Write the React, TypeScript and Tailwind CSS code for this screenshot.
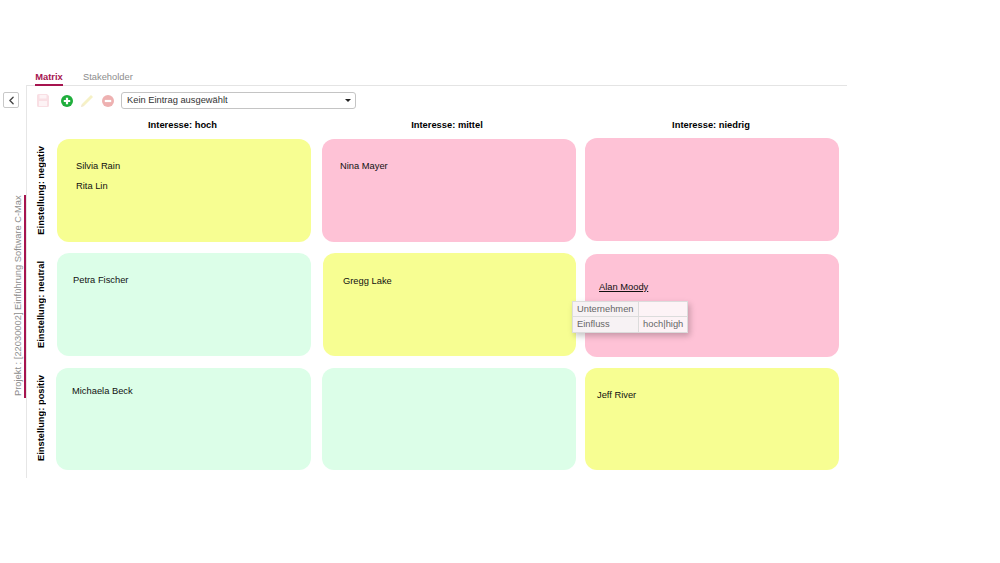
import { ChevronLeft } from "lucide-react";

const YELLOW = "bg-[#f7fe92]";
const PINK = "bg-[#fec2d6]";
const GREEN = "bg-[#dcfee8]";

function SaveIcon() {
  return (
    <svg width="12" height="13" viewBox="0 0 12 13" className="block">
      <path d="M0 1.5A1.5 1.5 0 0 1 1.500 0H10l2 2v9.500A1.500 1.500 0 0 1 10.500 13h-9A1.500 1.500 0 0 1 0 11.500z" fill="#f9dfe4" />
      <rect x="2.500" y="1" width="7" height="3.500" fill="#fdf3f5" />
      <rect x="2" y="7" width="8" height="5" fill="#fdf3f5" />
    </svg>
  );
}

function AddIcon() {
  return (
    <svg width="12" height="12" viewBox="0 0 12 12" className="block">
      <circle cx="6" cy="6" r="6" fill="#1fae3c" />
      <path d="M6 2.800v6.400M2.800 6h6.400" stroke="#fff" strokeWidth="2.200" />
    </svg>
  );
}

function PencilIcon() {
  return (
    <svg width="14" height="14" viewBox="0 0 14 14" className="block">
      <path d="M11 1l2 2-9 9-3 1 1-3z" fill="#f6f1c6" />
      <path d="M1 13l1-3 2 2z" fill="#f2e7d4" />
    </svg>
  );
}

function RemoveIcon() {
  return (
    <svg width="12" height="12" viewBox="0 0 12 12" className="block">
      <circle cx="6" cy="6" r="6" fill="#eeb1b1" />
      <path d="M2.800 6h6.400" stroke="#fff" strokeWidth="2.200" />
    </svg>
  );
}

function RowLabel({ text }: { text: string }) {
  return (
    <div className="flex items-center justify-center pl-[7px]">
      <span className="rotate-180 text-[9.333px] leading-[12px] font-bold text-black whitespace-nowrap [writing-mode:vertical-rl]">
        {text}
      </span>
    </div>
  );
}

export default function App() {
  return (
    <div className="w-[1000px] h-[563px] bg-white pt-[70px] font-['Liberation_Sans',Arial,sans-serif] overflow-hidden">
      <div className="flex h-[408px]">
        <aside className="w-[27px] shrink-0 mt-[15px] h-[393px] border-r border-[#e6e6e6] flex flex-col">
          <button className="ml-[3px] mt-[7px] w-4 h-4 border border-[#c8c8c8] rounded-[2px] flex items-center justify-center text-[#444]">
            <ChevronLeft size={13} strokeWidth={2.500} />
          </button>
          <div className="mt-[87px] h-[203px] w-[26px] flex justify-end">
            <span className="rotate-180 border-l-2 border-[#a6144f] pr-[1px] h-[203px] text-[9.333px] leading-[12px] text-[#8d8d8d] whitespace-nowrap text-right [writing-mode:vertical-rl]">
              Projekt : [22030002] Einführung Software C-Max
            </span>
          </div>
        </aside>

        <main className="w-[820px]">
          <nav className="h-[16px] border-b border-[#e4e4e4] flex pl-[8px] text-[9.333px] leading-[14px]">
            <span className="h-[16px] w-[28px] border-b-2 border-[#a6144f] font-bold text-[#a6144f] text-center">Matrix</span>
            <span className="ml-[20px] text-[#8d8d8d]">Stakeholder</span>
          </nav>

          <div className="h-[17px] mt-[6px] flex items-center">
            <span className="ml-[10px]"><SaveIcon /></span>
            <span className="ml-[12px]"><AddIcon /></span>
            <span className="ml-[7px]"><PencilIcon /></span>
            <span className="ml-[8px]"><RemoveIcon /></span>
            <div className="ml-[7px] w-[235px] h-[17px] border border-[#c4c4c4] rounded-[3px] flex items-center justify-between pl-[5px] pr-[4px] text-[9.333px] text-[#333]">
              <span>Kein Eintrag ausgewählt</span>
              <span className="w-0 h-0 border-x-[3px] border-x-transparent border-t-[3px] border-t-[#222]" />
            </div>
          </div>

          <div className="grid grid-cols-[20px_254px_254px_254px] grid-rows-[14px_103px_103px_103px] gap-x-[10px] gap-y-[11px] mt-[5px] relative">
            <div />
            <div className="pt-[5px] pr-[3px] text-center text-[9.333px] font-bold text-black leading-[12px]">Interesse: hoch</div>
            <div className="pt-[5px] pr-[2px] text-center text-[9.333px] font-bold text-black leading-[12px]">Interesse: mittel</div>
            <div className="pt-[5px] pr-[2px] text-center text-[9.333px] font-bold text-black leading-[12px]">Interesse: niedrig</div>

            <RowLabel text="Einstellung: negativ" />
            <div className={`${YELLOW} rounded-[12px] pl-[19px] pt-[20px] text-[9.333px] leading-[14px] text-[#111]`}>
              <p>Silvia Rain</p>
              <p className="mt-[6px]">Rita Lin</p>
            </div>
            <div className={`${PINK} rounded-[12px] ml-px -mr-px pl-[18px] pt-[20px] text-[9.333px] leading-[14px] text-[#111]`}>Nina Mayer</div>
            <div className={`${PINK} rounded-[12px] -mt-px mb-px`} />

            <RowLabel text="Einstellung: neutral" />
            <div className={`${GREEN} rounded-[12px] pl-[16px] pt-[20px] text-[9.333px] leading-[14px] text-[#111]`}>Petra Fischer</div>
            <div className={`${YELLOW} rounded-[12px] ml-[2px] -mr-px pl-[20px] pt-[21px] text-[9.333px] leading-[14px] text-[#111]`}>Gregg Lake</div>
            <div className={`${PINK} rounded-[12px] mt-px -mb-px pl-[14px] pt-[26px] text-[9.333px] leading-[14px] text-[#111]`}>
              <span className="underline">Alan Moody</span>
            </div>

            <RowLabel text="Einstellung: positiv" />
            <div className={`${GREEN} rounded-[12px] mt-px -ml-px pl-[16px] pt-[16px] text-[9.333px] leading-[14px] text-[#111]`}>Michaela Beck</div>
            <div className={`${GREEN} rounded-[12px] mt-px ml-px -mr-px`} />
            <div className={`${YELLOW} rounded-[12px] mt-px pl-[12px] pt-[20px] text-[9.333px] leading-[14px] text-[#111]`}>Jeff River</div>

            <table className="absolute left-[545px] top-[187px] w-[116px] table-fixed border-collapse text-[9.333px] leading-[13px] text-[#666] bg-[#fdf6f8]/95 shadow-[2px_3px_6px_rgba(0,0,0,0.22)]">
              <tbody>
                <tr className="h-[15px]">
                  <td className="w-[66px] border border-[#dcdcdc] pl-[4px] bg-[#f7f2f4]">Unternehmen</td>
                  <td className="border border-[#dcdcdc] pl-[4px]" />
                </tr>
                <tr className="h-[16px]">
                  <td className="border border-[#dcdcdc] pl-[4px] bg-[#f7f2f4]">Einfluss</td>
                  <td className="border border-[#dcdcdc] pl-[4px]">hoch|high</td>
                </tr>
              </tbody>
            </table>
          </div>
        </main>
      </div>
    </div>
  );
}
